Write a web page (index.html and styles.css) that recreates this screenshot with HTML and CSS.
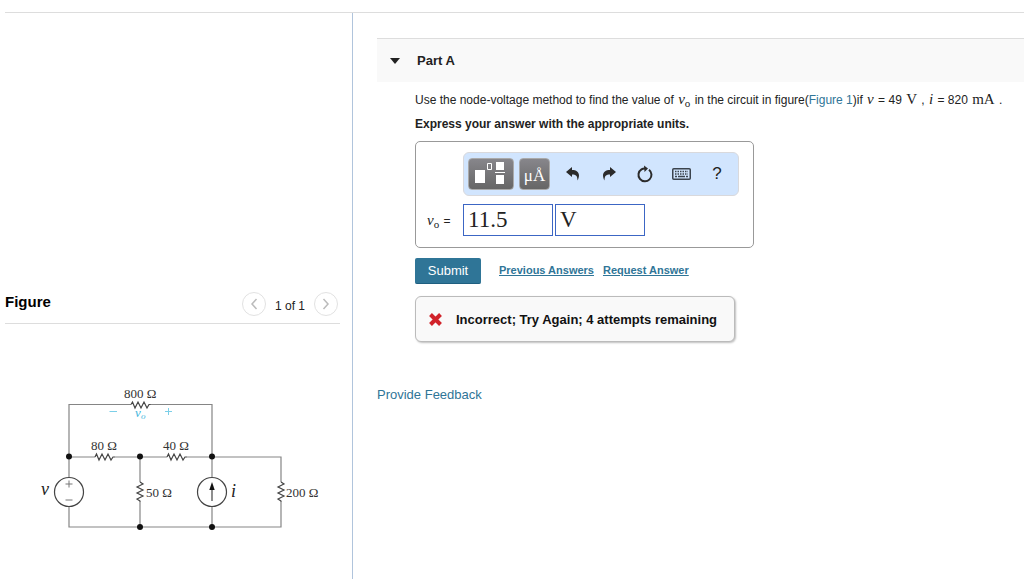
FILE: index.html
```html
<!DOCTYPE html>
<html lang="en">
<head>
    <meta charset="UTF-8">
    <meta name="viewport" content="width=device-width, initial-scale=1.0">
    <title>Part A</title>
    <link rel="stylesheet" href="styles.css">
</head>
<body>
    <div class="page">
        <aside class="figure-panel">
            <div class="figure-header">
                <h2>Figure</h2>
                <div class="pager">
                    <button type="button" aria-label="Previous figure">
                        <svg width="8" height="12" viewBox="0 0 8 12"><path d="M6.500 1L2 6l4.500 5"/></svg>
                    </button>
                    <span>1 of 1</span>
                    <button type="button" aria-label="Next figure">
                        <svg width="8" height="12" viewBox="0 0 8 12"><path d="M1.500 1L6 6l-4.500 5"/></svg>
                    </button>
                </div>
            </div>

            <svg class="circuit" viewBox="5 370 335 180" role="img" aria-label="Circuit diagram">
                <!-- wires -->
                <g class="wire">
                    <path d="M69 477V404.500H131M150 404.500H212V477"/>
                    <path d="M69 457H95M114 457H167M186 457H281V482M281 502V527H69V507"/>
                    <path d="M140 457V482M140 502V527M212 507V527"/>
                </g>
                <!-- resistors -->
                <g class="resistor">
                    <path d="M131 404.500l1.500-2.500 2.500 6 3-6 3 6 3-6 3 6 2-3.500h1.500"/>
                    <path d="M95 457l1.500-3 2.500 6 3-6 3 6 3-6 3 6 2-3h1.500"/>
                    <path d="M167 457l1.500-3 2.500 6 3-6 3 6 3-6 3 6 2-3h1.500"/>
                    <path d="M140 482l3 2-6 3 6 3-6 3 6 3-6 3 3 2v1"/>
                    <path d="M281 482l3 2-6 3 6 3-6 3 6 3-6 3 3 2v1"/>
                </g>
                <!-- sources -->
                <g class="source">
                    <circle cx="69" cy="492" r="14.500"/>
                    <circle cx="212" cy="492" r="14.500"/>
                    <path d="M212 501V488"/>
                </g>
                <path class="sign" d="M65.500 484h7M69 480.500v7M65.500 500h7"/>
                <path class="sign blue" d="M109.500 411.500h7.500M165 411.500h7M168.500 408v7"/>
                <path class="dot" d="M209.300 490L212 482l2.700 8z"/>
                <g class="dot">
                    <circle cx="69" cy="456.500" r="3"/>
                    <circle cx="140" cy="456.500" r="3"/>
                    <circle cx="212" cy="456.500" r="3"/>
                    <circle cx="140" cy="527" r="3"/>
                    <circle cx="212" cy="527" r="3"/>
                </g>
                <!-- values -->
                <g class="value">
                    <text x="124" y="398">800 Ω</text>
                    <text x="91" y="450">80 Ω</text>
                    <text x="163" y="450">40 Ω</text>
                    <text x="146" y="497">50 Ω</text>
                    <text x="286" y="497">200 Ω</text>
                </g>
                <text class="name" x="41" y="495">v</text>
                <text class="name" x="231" y="497">i</text>
                <text class="name-blue" x="135" y="417">v</text>
                <text class="name-blue sub" x="141" y="419">o</text>
            </svg>
        </aside>

        <main class="content">
            <section class="part">
                <h1 class="part-header">
                    <svg width="10" height="6" viewBox="0 0 10 6"><path d="M0 0h10L5 6z" fill="#222"/></svg>
                    Part A
                </h1>
                <div class="part-body">
                    <p class="question">Use the node-voltage method to find the value of <span class="math"><i>v</i><sub>o</sub></span> in the circuit in figure(<a href="#">Figure 1</a>)if <i class="math">v</i> = 49 <span class="math">V</span> , <i class="math">i</i> = 820 <span class="math">mA</span> .</p>
                    <p class="instructions">Express your answer with the appropriate units.</p>

                    <form>
                        <div class="answer-box">
                            <div class="toolbar">
                                <button type="button" class="tool-dark wide" aria-label="Templates">
                                    <svg width="44" height="30" viewBox="1 1 44 30">
                                        <path fill="#fff" d="M7 12h10v13H7zM28 4h8v8h-8zM27 14h10v1H27zM28 17h8v9h-8z"/>
                                        <path fill="none" stroke="#fff" d="M19.500 5.500h4v6h-4z"/>
                                    </svg>
                                </button>
                                <button type="button" class="tool-dark units">μÅ</button>
                                <div class="tools">
                                    <button type="button" aria-label="Undo">
                                        <svg width="14" height="14" viewBox="0 0 14 14"><path fill="#2b2b2b" d="M0 5L6 0v3c6 0 9 4 5.500 10.500C11.500 9 10 7.500 6 7.500V10z"/></svg>
                                    </button>
                                    <button type="button" aria-label="Redo">
                                        <svg width="14" height="14" viewBox="0 0 14 14"><path fill="#2b2b2b" d="M14 5L8 0v3c-6 0-9 4-5.500 10.500C2.500 9 4 7.500 8 7.500V10z"/></svg>
                                    </button>
                                    <button type="button" aria-label="Reset">
                                        <svg width="16" height="18" viewBox="0 0 16 18"><path fill="none" stroke="#2b2b2b" stroke-width="2" d="M12 4.700A6.500 6.500 0 1 1 4.500 4.300Q6 3.400 8 3.500"/><path fill="#2b2b2b" d="M7 .5L11 3.500 7.500 7z"/></svg>
                                    </button>
                                    <button type="button" aria-label="Keyboard">
                                        <svg width="19" height="12" viewBox="0 0 19 12"><rect x=".75" y=".75" width="17.500" height="10.500" rx="1" fill="none" stroke="#3b434d" stroke-width="1.500"/><path fill="none" stroke="#3b434d" stroke-width="1.500" stroke-dasharray="1.500 1" d="M3 3.500h13M3 6h13"/><path stroke="#3b434d" stroke-width="1.500" d="M3 8.500h2M6 8.500h7M14 8.500h2"/></svg>
                                    </button>
                                    <button type="button" aria-label="Help">?</button>
                                </div>
                            </div>
                            <label for="value" class="answer-label"><span class="math"><i>v</i><sub>o</sub></span> =</label>
                            <div class="fields">
                                <input type="text" id="value" value="11.5">
                                <input type="text" id="units" value="V" aria-label="Units">
                            </div>
                        </div>

                        <div class="actions">
                            <button type="submit" class="submit">Submit</button>
                            <a href="#">Previous Answers</a>
                            <a href="#">Request Answer</a>
                        </div>
                    </form>

                    <div class="feedback">
                        <svg width="13" height="13" viewBox="0 0 13 13"><path fill="none" stroke="#d1232a" stroke-width="4" d="M1.500 1.500l10 10M11.500 1.500l-10 10"/></svg>
                        Incorrect; Try Again; 4 attempts remaining
                    </div>
                </div>
            </section>
            <a class="provide" href="#">Provide Feedback</a>
        </main>
    </div>
</body>
</html>
```
FILE: styles.css
```css
* {
    box-sizing: border-box;
}
body {
    margin: 0;
    background: #fff;
    color: #222;
    font-family: "Liberation Sans", Arial, sans-serif;
    font-size: 12px;
}
h1, h2, p {
    margin: 0;
}
a {
    color: #2f7597;
}
button {
    font-family: inherit;
    padding: 0;
    cursor: pointer;
}
.page {
    display: flex;
    min-height: calc(100vh - 12px);
    margin: 12px 0 0 5px;
    border-top: 1px solid #ddd;
}

/* left side */
.figure-panel {
    flex: 0 0 348px;
    padding: 279px 12px 0 0;
    border-right: 1px solid #b0c4dc;
}
.figure-header {
    display: flex;
    justify-content: space-between;
    align-items: flex-start;
    height: 32px;
    border-bottom: 1px solid #ddd;
}
.figure-header h2 {
    color: #000;
    font-size: 15px;
    line-height: 20px;
}
.pager {
    display: flex;
    align-items: center;
    gap: 9px;
    padding-right: 2px;
}
.pager span {
    padding-top: 4px;
}
.pager button {
    display: flex;
    align-items: center;
    justify-content: center;
    width: 24px;
    height: 24px;
    border: 1px solid #e2e2e2;
    border-radius: 50%;
    background: #fff;
}
.pager path {
    fill: none;
    stroke: #bbb;
    stroke-width: 1.5;
}

/* circuit drawing */
.circuit {
    display: block;
    width: 100%;
    margin-top: 46px;
    font-family: "Liberation Serif", "Times New Roman", serif;
}
.wire {
    fill: none;
    stroke: #858585;
    stroke-width: 1.2;
}
.resistor, .source {
    fill: none;
    stroke: #444;
    stroke-width: 1.2;
}
.sign {
    stroke: #777;
    stroke-width: 1;
}
.blue {
    stroke: #7ccfe8;
}
.dot {
    fill: #111;
}
.value {
    fill: #333;
    font-size: 13px;
}
.name {
    fill: #222;
    font-size: 18px;
    font-style: italic;
}
.name-blue {
    fill: #3fb6dc;
    font-size: 13px;
    font-style: italic;
}
.sub {
    font-size: 9px;
}

/* right side */
.content {
    flex: 1;
    min-width: 0;
    padding: 25px 0 0 24px;
}
.part-header {
    display: flex;
    align-items: center;
    gap: 17px;
    height: 44px;
    padding-left: 13px;
    border-top: 1px solid #ddd;
    background: #f9f9f9;
    font-size: 13px;
}
.part-body {
    padding-left: 38px;
}
.math {
    margin: 0 1px;
    font-family: "Liberation Serif", "Times New Roman", serif;
    font-size: 15px;
}
.math sub {
    font-size: 11px;
    line-height: 0;
    vertical-align: -3px;
}
.question {
    padding-top: 7px;
    line-height: 20px;
}
.question a {
    text-decoration: none;
}
.instructions {
    padding-top: 4px;
    font-weight: bold;
    line-height: 20px;
}
.answer-box {
    display: grid;
    grid-template-columns: 36px 276px;
    row-gap: 8px;
    align-items: center;
    width: 339px;
    margin-top: 7px;
    padding: 10px 0 11px 11px;
    border: 1px solid #999;
    border-radius: 5px;
}
.answer-label {
    white-space: nowrap;
}
.answer-label .math {
    margin-left: 0;
}
.toolbar {
    grid-column: 2;
    display: flex;
    align-items: center;
    gap: 5px;
    height: 44px;
    padding-left: 4px;
    border: 1px solid #d9d9dc;
    border-radius: 6px;
    background: #d1e5fe;
}
.toolbar button {
    display: flex;
    align-items: center;
    justify-content: center;
    width: 36px;
    height: 32px;
    border: 0;
    background: none;
    color: #222;
    font-size: 17px;
}
.toolbar .tool-dark {
    width: 31px;
    border: 1px solid #aaa;
    border-radius: 4px;
    background: linear-gradient(#87868b, #666);
    color: #fff;
}
.toolbar .wide {
    width: 46px;
}
.toolbar .units {
    padding-top: 4px;
    font-family: "Liberation Serif", "Times New Roman", serif;
}
.tools {
    display: flex;
}
.fields {
    display: flex;
    gap: 2px;
}
.fields input {
    width: 90px;
    height: 32px;
    padding: 0 4px;
    border: 1px solid #3c66c4;
    color: #222;
    font-family: "Liberation Serif", "Times New Roman", serif;
    font-size: 23px;
}
.actions {
    display: flex;
    align-items: center;
    gap: 9px;
    margin-top: 10px;
    font-size: 11px;
    font-weight: bold;
}
.actions a {
    padding-bottom: 2px;
}
.submit {
    width: 66px;
    height: 26px;
    margin-right: 9px;
    border: 0;
    border-bottom: 1px solid #1f5f80;
    border-radius: 2px;
    background: #2f7597;
    color: #fff;
    font-size: 13px;
}
.feedback {
    display: flex;
    align-items: center;
    gap: 14px;
    width: 320px;
    height: 46px;
    margin-top: 12px;
    padding-left: 13px;
    border: 1px solid #bbb;
    border-radius: 6px;
    background: #f9f9f9;
    box-shadow: 1px 1px 2px rgba(0, 0, 0, 0.25);
    color: #111;
    font-size: 13px;
    font-weight: bold;
}
.provide {
    display: inline-block;
    margin-top: 45px;
    font-size: 13px;
    text-decoration: none;
}
```
